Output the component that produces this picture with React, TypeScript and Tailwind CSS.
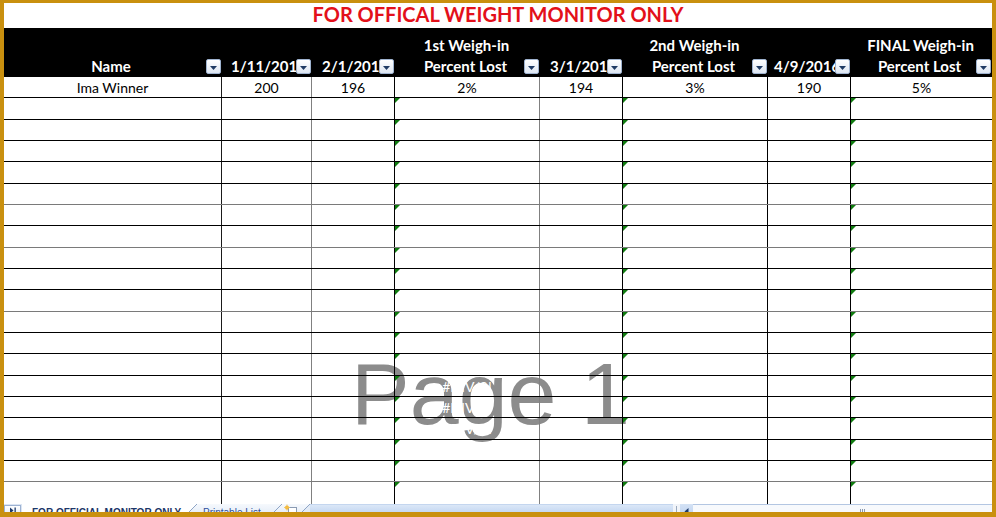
import React from "react";

const GRID = "grid grid-cols-[218px_90px_83px_145px_83px_145px_83px_141px]";

const vBorders = [
  "border-r border-r-[#1a1a1a]",
  "border-r border-r-[#808080]",
  "border-r border-r-black",
  "border-r border-r-[#808080]",
  "border-r border-r-black",
  "border-r border-r-black",
  "border-r border-r-black",
  "",
];

const grayRows = new Set([5, 7, 10, 18]);
const pctCols = new Set([3, 5, 7]);

type H = { l1?: string; l2: string; kind: "center" | "date"; pl?: string };

const headers: H[] = [
  { l2: "Name", kind: "center" },
  { l2: "1/11/2016", kind: "date", pl: "pl-[9px]" },
  { l2: "2/1/2016", kind: "date", pl: "pl-[10px]" },
  { l1: "1st Weigh-in", l2: "Percent Lost", kind: "center" },
  { l2: "3/1/2016", kind: "date", pl: "pl-[10px]" },
  { l1: "2nd Weigh-in", l2: "Percent Lost", kind: "center" },
  { l2: "4/9/2016", kind: "date", pl: "pl-[6px]" },
  { l1: "FINAL Weigh-in", l2: "Percent Lost", kind: "center" },
];

const dataRow = ["Ima Winner", "200", "196", "2%", "194", "3%", "190", "5%"];

function FilterBtn() {
  return (
    <div className="absolute right-[1px] bottom-[3px] w-[15px] h-[15px] rounded-[2px] border border-[#9fb3cf] bg-gradient-to-b from-white to-[#dde6f2] flex items-center justify-center z-10">
      <svg width="7" height="4" viewBox="0 0 7 4" className="mt-[2px]">
        <path d="M0 0H7L3.5 4Z" fill="#1f3b64" />
      </svg>
    </div>
  );
}

function HeaderCell({ h }: { h: H }) {
  return (
    <div className="relative h-[49px] flex flex-col justify-end overflow-hidden">
      {h.l1 && <div className="leading-[21px] text-center whitespace-nowrap pr-[2px]">{h.l1}</div>}
      {h.kind === "center" ? (
        <div className="leading-[21px] text-center whitespace-nowrap pr-[4px]">{h.l2}</div>
      ) : (
        <div className={`leading-[21px] whitespace-nowrap overflow-hidden ${h.pl}`}>{h.l2}</div>
      )}
      <FilterBtn />
    </div>
  );
}

function ErrTri() {
  return (
    <div className="absolute top-0 left-0 w-0 h-0 border-t-[5px] border-r-[5px] border-t-[#107c10] border-r-transparent" />
  );
}

export default function App() {
  const rows = Array.from({ length: 20 }, (_, i) => i);
  return (
    <div className="w-[996px] h-[517px] bg-[#c9900f] pt-[3px] pl-[4px] pr-[4px] pb-[5px] font-['Lato','Open_Sans',sans-serif]">
      <div className="relative w-[988px] h-[509px] bg-white overflow-hidden flex flex-col">
        {/* watermark */}
        <div className="absolute left-[347px] top-[347px] z-0 text-[88px] leading-[88px] text-[#8c8c8c] font-['Liberation_Sans',Arial,sans-serif] whitespace-nowrap pointer-events-none">
          Page 1
        </div>

        {/* title */}
        <div className="h-[25px] flex-none text-center text-[20px] leading-[22px] font-bold text-[#e3101a] whitespace-nowrap">
          FOR OFFICAL WEIGHT MONITOR ONLY
        </div>

        {/* header */}
        <div className={`${GRID} h-[49px] flex-none bg-black text-white font-bold text-[15px]`}>
          {headers.map((h, i) => (
            <HeaderCell key={i} h={h} />
          ))}
        </div>

        {/* body */}
        <div className="relative z-10 flex-none">
          {rows.map((r) => (
            <div
              key={r}
              className={`${GRID} h-[21.33px] ${
                r === 19 ? "" : grayRows.has(r) ? "border-b border-b-[#7a7a7a]" : "border-b border-b-black"
              }`}
            >
              {dataRow.map((v, c) => (
                <div
                  key={c}
                  className={`relative h-full text-center text-[14px] leading-[22px] whitespace-nowrap overflow-hidden ${vBorders[c]} ${
                    r === 0 ? "text-black" : "text-white"
                  }`}
                >
                  {r === 0 ? v : pctCols.has(c) ? "#DIV/0!" : ""}
                  {r > 0 && pctCols.has(c) && <ErrTri />}
                </div>
              ))}
            </div>
          ))}
        </div>

        {/* sheet tab bar */}
        <div className="flex h-[14px] flex-none font-['Liberation_Sans',Arial,sans-serif]">
          <div className="w-[18px] h-full flex-none bg-[#dbe5f3] pt-[1px]">
            <div className="w-[17px] h-[12px] border border-[#9db2d2] bg-gradient-to-b from-white to-[#e3ebf6] flex items-center justify-center">
              <svg width="8" height="7" viewBox="0 0 8 7">
                <path d="M1 0.5L4.5 3.5L1 6.5Z" fill="#1d3a6a" />
                <rect x="5.5" y="0.5" width="1.3" height="6" fill="#1d3a6a" />
              </svg>
            </div>
          </div>
          <div className="relative w-[288px] h-full flex-none">
            <svg className="absolute inset-0" width="288" height="14" viewBox="0 0 288 14">
              <defs>
                <linearGradient id="tabg" x1="0" y1="0" x2="0" y2="1">
                  <stop offset="0" stopColor="#f6f9fd" />
                  <stop offset="1" stopColor="#dde7f4" />
                </linearGradient>
              </defs>
              <rect x="0" y="0" width="288" height="14" fill="#e3ebf6" />
              <polygon points="246,0 288,0 274,14 232,14" fill="url(#tabg)" />
              <polygon points="161,0 260,0 246,14 147,14" fill="url(#tabg)" />
              <polygon points="0,0 175,0 161,14 0,14" fill="#ffffff" />
              <line x1="175" y1="0" x2="161" y2="14" stroke="#8ea5c6" strokeWidth="1" />
              <line x1="260" y1="0" x2="246" y2="14" stroke="#8ea5c6" strokeWidth="1" />
              <line x1="288" y1="0" x2="274" y2="14" stroke="#8ea5c6" strokeWidth="1" />
              <rect x="266.5" y="3.5" width="8" height="9" fill="#ffffff" stroke="#8b9bb3" />
              <circle cx="265" cy="3.5" r="2" fill="#f2b233" />
              <path d="M265 0.5V6.5M262 3.5H268" stroke="#f5c24a" strokeWidth="0.8" />
            </svg>
            <span className="absolute left-[10px] top-[3px] text-[10px] leading-[11px] font-bold text-[#1d3768] whitespace-nowrap">
              FOR OFFICIAL MONITOR ONLY
            </span>
            <span className="absolute left-[181px] top-[3px] text-[10px] leading-[11px] text-[#2d4f9c] whitespace-nowrap">
              Printable List
            </span>
          </div>
          <div className="w-[363px] h-full flex-none bg-gradient-to-b from-[#dbe7f7] to-[#b3ccee] border-t border-t-[#c4d6ef]" />
          <div className="w-[7px] h-full flex-none bg-[#f1f4f9] flex justify-center pt-[2px]">
            <div className="w-px bg-[#9aa9bd] h-full" />
          </div>
          <div className="w-[13px] h-full flex-none bg-gradient-to-b from-[#d4e2f5] to-[#b9cfee] flex items-start justify-center pt-[4px]">
            <svg width="5" height="7" viewBox="0 0 5 7">
              <path d="M4.5 0L0.5 3.5L4.5 7Z" fill="#1d3a6a" />
            </svg>
          </div>
          <div className="flex-1 h-full bg-[#f7f9fc] border-t border-t-[#b3c6e2] flex pl-[167px] pt-[4px] gap-[1px]">
            <div className="w-px h-full bg-[#8a9ab0]" />
            <div className="w-px h-full bg-[#8a9ab0]" />
            <div className="w-px h-full bg-[#8a9ab0]" />
          </div>
        </div>
      </div>
    </div>
  );
}
